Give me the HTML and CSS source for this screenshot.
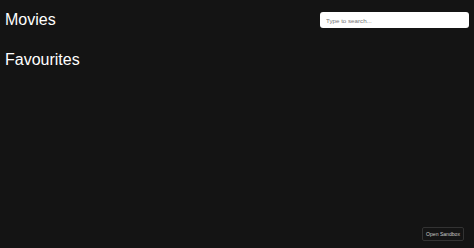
FILE: index.html
```html
<!DOCTYPE html>
<html lang="en">
<head>
    <meta charset="UTF-8">
    <meta name="viewport" content="width=device-width, initial-scale=1.0">
    <title>Movies</title>
    <link rel="stylesheet" href="styles.css">
</head>
<body>
    <!-- header -->
    <header class="top-bar">
        <h1>Movies</h1>
        <input class="search" type="text" placeholder="Type to search...">
    </header>

    <!-- favourites -->
    <section class="favourites">
        <h2>Favourites</h2>
    </section>

    <a class="sandbox-btn" href="#">Open Sandbox</a>
</body>
</html>
```

FILE: styles.css
```css
* {
    margin: 0;
    padding: 0;
    box-sizing: border-box;
    font-family: 'Liberation Sans', Arial, sans-serif;
}

body {
    background: #141414;
    color: white;
    width: 474px;
    height: 248px;
    overflow: hidden;
}

.top-bar {
    display: flex;
    justify-content: space-between;
    align-items: flex-start;
    padding: 10px 5px 0 5px;
}

h1, h2 {
    font-weight: normal;
    font-size: 16px;
    line-height: 19px;
}

.search {
    width: 149px;
    height: 16px;
    border: none;
    border-radius: 3px;
    background: white;
    padding: 0 6px;
    font-size: 6.2px;
    color: #333;
    margin-top: 2px;
}

.search::placeholder {
    color: #777;
}

.favourites {
    padding: 21px 5px 0 5px;
}

.sandbox-btn {
    position: fixed;
    right: 10px;
    bottom: 7px;
    width: 42px;
    height: 14px;
    display: flex;
    align-items: center;
    justify-content: center;
    font-size: 5.1px;
    color: #ccc;
    text-decoration: none;
    background: #141414;
    border: 1px solid #333;
    border-radius: 2px;
}
```
